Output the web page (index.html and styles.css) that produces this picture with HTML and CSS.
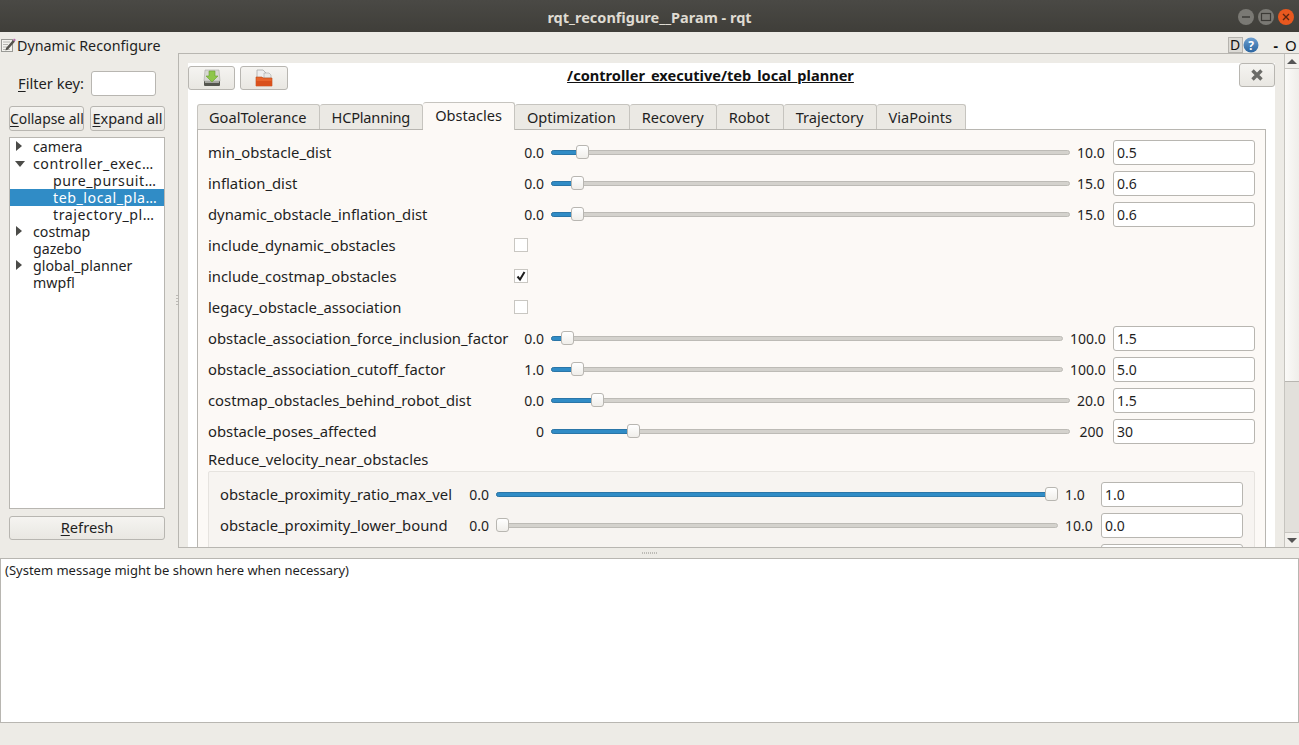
FILE: index.html
```html
<!DOCTYPE html>
<html lang="en">
<head>
<meta charset="utf-8">
<title>rqt_reconfigure__Param - rqt</title>
<link rel="stylesheet" href="styles.css">
</head>
<body>
<header class="titlebar">
  <span class="title">rqt_reconfigure__Param - rqt</span>
  <div class="winbtns">
    <span class="winbtn"><svg width="16" height="16" viewBox="0 0 16 16"><path d="M4 8h8" stroke="#3c3b37" stroke-width="1.5"/></svg></span>
    <span class="winbtn"><svg width="16" height="16" viewBox="0 0 16 16"><rect x="3.5" y="4.5" width="9" height="7" fill="none" stroke="#3c3b37" stroke-width="1.2"/></svg></span>
    <span class="winbtn close"><svg width="16" height="16" viewBox="0 0 16 16"><path d="M5 5l6 6M11 5l-6 6" stroke="#5a2410" stroke-width="1.4"/></svg></span>
  </div>
</header>
<div class="docktitle">
  <svg class="dockicon" width="16" height="16" viewBox="0 0 16 16"><rect x="1.5" y="2.5" width="11" height="12" fill="#f4f3ef" stroke="#9a9a96"/><path d="M3 5h7M3 7.5h5M3 10h4M3 12.5h7" stroke="#b5b5b0"/><path d="M6 11l7-8 2 1.500-7 8-2.500 1z" fill="#55534e"/><path d="M13 3l1-1.500 1.800 1.300-1 1.600z" fill="#b267a8"/></svg>
  <span class="docktext">Dynamic Reconfigure</span>
  <span class="dockright">
    <span class="dbox">D</span>
    <svg class="help" width="16" height="16" viewBox="0 0 16 16"><defs><linearGradient id="hg" x1="0" y1="0" x2="0" y2="1"><stop offset="0" stop-color="#6d9fd0"/><stop offset="1" stop-color="#2a649f"/></linearGradient></defs><circle cx="8" cy="8" r="7.500" fill="url(#hg)"/><text x="8" y="12.500" text-anchor="middle" class="helpq">?</text></svg>
    <span class="dash">-</span>
    <span class="oh">O</span>
  </span>
</div>
<main class="main">
  <aside class="left">
    <div class="filter">
      <span class="flabel"><u>F</u>ilter key:</span>
      <span class="input finput"></span>
    </div>
    <div class="btnrow">
      <span class="btn tight"><u>C</u>ollapse all</span>
      <span class="btn"><u>E</u>xpand all</span>
    </div>
    <div class="tree">
      <div class="node"><i class="arrow right"></i>camera</div>
      <div class="node elided"><i class="arrow down"></i>controller_exec…</div>
      <div class="node sub elided">pure_pursuit…</div>
      <div class="node sub elided sel">teb_local_pla…</div>
      <div class="node sub elided">trajectory_pl…</div>
      <div class="node"><i class="arrow right"></i>costmap</div>
      <div class="node">gazebo</div>
      <div class="node"><i class="arrow right"></i>global_planner</div>
      <div class="node">mwpfl</div>
    </div>
    <span class="btn refresh"><u>R</u>efresh</span>
    <i class="dots vdots"></i>
  </aside>
  <section class="panel">
    <div class="sheet">
      <div class="toolbar">
        <span class="btn tool">
          <svg width="20" height="18" viewBox="0 0 20 18"><path d="M3 1h14l1 11H2z" fill="#d8d8d3" stroke="#a9a9a4" stroke-width=".6"/><rect x="2" y="12" width="16" height="5" rx="1" fill="#55564f"/><rect x="3" y="12" width="14" height="2" fill="#a7a8a2"/><path d="M7 2h6v5h3l-6 6-6-6h3z" fill="#8ec64a" stroke="#6a9f2f" stroke-width=".6"/></svg>
        </span>
        <span class="btn tool t2">
          <svg width="18" height="18" viewBox="0 0 18 18"><path d="M2 1h6l3 3v5H2z" fill="#eee" stroke="#a8a8a8" stroke-width=".8"/><path d="M9 4h5l2 2v3H9z" fill="#e8e8e6" stroke="#a8a8a8" stroke-width=".6"/><path d="M1 8h6l1 1h9v8H1z" fill="#e8642c" stroke="#b84a18" stroke-width=".6"/><rect x="1" y="12" width="16" height="5" fill="#d9501c"/></svg>
        </span>
        <span class="nodepath">/controller_executive/teb_local_planner</span>
        <span class="btn closebtn">
          <svg width="14" height="14" viewBox="0 0 14 14"><path d="M2.500 2.500l9 9M11.500 2.500l-9 9" stroke="#6b6b68" stroke-width="3.400"/></svg>
        </span>
      </div>
      <nav class="tabs">
        <span class="tab">GoalTolerance</span>
        <span class="tab">HCPlanning</span>
        <span class="tab active">Obstacles</span>
        <span class="tab">Optimization</span>
        <span class="tab">Recovery</span>
        <span class="tab">Robot</span>
        <span class="tab">Trajectory</span>
        <span class="tab">ViaPoints</span>
      </nav>
      <div class="pane">
        <div class="row"><span class="lbl">min_obstacle_dist</span><span class="min">0.0</span><span class="slider" style="--p:.05"><i></i><b></b></span><span class="max">10.0</span><span class="input">0.5</span></div>
        <div class="row"><span class="lbl">inflation_dist</span><span class="min">0.0</span><span class="slider" style="--p:.04"><i></i><b></b></span><span class="max">15.0</span><span class="input">0.6</span></div>
        <div class="row"><span class="lbl">dynamic_obstacle_inflation_dist</span><span class="min">0.0</span><span class="slider" style="--p:.04"><i></i><b></b></span><span class="max">15.0</span><span class="input">0.6</span></div>
        <div class="row"><span class="lbl">include_dynamic_obstacles</span><span class="check"></span></div>
        <div class="row"><span class="lbl">include_costmap_obstacles</span><span class="check"><svg width="12" height="12" viewBox="0 0 12 12"><path d="M2.500 6.500l2.500 3L9.500 2" fill="none" stroke="#1e1e1e" stroke-width="2"/></svg></span></div>
        <div class="row"><span class="lbl">legacy_obstacle_association</span><span class="check"></span></div>
        <div class="row"><span class="lbl">obstacle_association_force_inclusion_factor</span><span class="min">0.0</span><span class="slider" style="--p:.02"><i></i><b></b></span><span class="max wide">100.0</span><span class="input">1.5</span></div>
        <div class="row"><span class="lbl">obstacle_association_cutoff_factor</span><span class="min">1.0</span><span class="slider" style="--p:.04"><i></i><b></b></span><span class="max wide">100.0</span><span class="input">5.0</span></div>
        <div class="row"><span class="lbl">costmap_obstacles_behind_robot_dist</span><span class="min">0.0</span><span class="slider" style="--p:.08"><i></i><b></b></span><span class="max">20.0</span><span class="input">1.5</span></div>
        <div class="row"><span class="lbl">obstacle_poses_affected</span><span class="min">0</span><span class="slider" style="--p:.15"><i></i><b></b></span><span class="max mid">200</span><span class="input">30</span></div>
        <div class="grouptitle">Reduce_velocity_near_obstacles</div>
        <div class="group">
          <div class="row"><span class="lbl">obstacle_proximity_ratio_max_vel</span><span class="min">0.0</span><span class="slider" style="--p:1"><i></i><b></b></span><span class="max">1.0</span><span class="input">1.0</span></div>
          <div class="row"><span class="lbl">obstacle_proximity_lower_bound</span><span class="min">0.0</span><span class="slider" style="--p:0"><i></i><b></b></span><span class="max">10.0</span><span class="input">0.0</span></div>
          <div class="row rowend"><span class="input"></span></div>
        </div>
      </div>
    </div>
    <div class="vscroll">
      <span class="sbtn"><i class="tri up"></i></span>
      <span class="thumb"></span>
      <span class="strack"></span>
      <span class="sbtn"><i class="tri dn"></i></span>
    </div>
  </section>
</main>
<div class="hsplit"><i class="dots hdots"></i></div>
<div class="log">(System message might be shown here when necessary)</div>
<div class="status"></div>
</body>
</html>
```
FILE: styles.css
```css
* { box-sizing: border-box; }
html, body { margin: 0; height: 745px; overflow: hidden; }
body {
  background: #edebe6;
  color: #1f1f1f;
  font-family: "Noto Sans", "Open Sans", sans-serif;
  font-size: 14px;
  line-height: 17px;
}
u { text-underline-offset: 2px; }

.titlebar {
  height: 32px;
  background: linear-gradient(#4a4945 0, #3f3e39 100%);
  position: relative;
  display: flex;
  align-items: center;
  justify-content: center;
  padding-top: 3px;
}
.title { color: #dfdbd2; font-weight: 700; font-size: 14.5px; }
.winbtns { position: absolute; right: 5px; top: 9px; display: flex; gap: 4px; }
.winbtn {
  width: 16px; height: 16px; border-radius: 50%;
  background: #7a7974;
  display: block;
}
.winbtn svg { display: block; }
.winbtn.close { background: #e9581f; }

.docktitle { height: 21px; display: flex; align-items: center; padding-top: 5px; }
.dockicon { margin-left: 0; flex: none; margin-top: -1px; }
.docktext { margin-left: 1px; font-size: 14.3px; }
.dockright { margin-left: auto; display: flex; align-items: center; height: 16px; }
.dbox {
  width: 15px; height: 16px; border: 1px solid #b5b3ae; background: #dcdad5;
  line-height: 14px; text-align: center; font-size: 14px; color: #111;
}
.help { display: block; }
.helpq { font: 700 12px "Noto Sans", sans-serif; fill: #fff; }
.dash { margin-left: 15px; font-weight: 700; color: #111; }
.oh { margin-left: 7px; width: 14px; color: #111; font-size: 15px; }

.main { height: 495px; display: flex; }
.left { width: 178px; flex: none; padding: 18px 13px 0 9px; display: flex; flex-direction: column; position: relative; }
.filter { display: flex; align-items: center; height: 25px; padding-left: 9px; gap: 6px; }
.flabel { width: 67px; white-space: nowrap; font-size: 14.7px; }
.input {
  display: block;
  background: #fff;
  border: 1px solid #b8b6b1;
  border-radius: 3px;
  height: 25px;
  line-height: 23px;
  padding-left: 3px;
  color: #1f1f1f;
}
.finput { width: 65px; }
.btnrow { display: flex; gap: 6px; margin-top: 10px; height: 25px; }
.btn {
  display: block;
  background: linear-gradient(#f5f4f1, #e9e7e2);
  border: 1px solid #b8b6b1;
  border-radius: 3px;
  text-align: center;
  white-space: nowrap;
  overflow: hidden;
}
.btnrow .btn { width: 75px; height: 25px; line-height: 23px; font-size: 14.5px; }
.btnrow .btn.tight { font-size: 13.9px; }
.tree {
  margin-top: 6px;
  height: 372px;
  background: #fff;
  border: 1px solid #b8b6b1;
}
.node {
  height: 17px; line-height: 17px;
  padding-left: 23px;
  position: relative;
  white-space: nowrap;
  font-size: 14.2px;
}
.node.sub { padding-left: 43px; }
.node.elided { letter-spacing: .55px; }
.node.sel { background: #308cc6; color: #fff; }
.arrow { position: absolute; display: block; width: 0; height: 0; }
.arrow.right { left: 6px; top: 3px; border-left: 6px solid #4b4b48; border-top: 5px solid transparent; border-bottom: 5px solid transparent; }
.arrow.down { left: 5px; top: 6px; border-top: 6px solid #4b4b48; border-left: 5px solid transparent; border-right: 5px solid transparent; }
.refresh { margin-top: 7px; height: 24px; line-height: 20px; font-size: 14.7px; }
.vdots { position: absolute; right: 0; top: 242px; width: 2px; height: 12px; background: repeating-linear-gradient(#bdbbb6 0 1px, transparent 1px 3px); }

.panel {
  flex: 1;
  display: flex;
  border-top: 1px solid #b8b6b1;
  border-left: 1px solid #b8b6b1;
  border-bottom: 1px solid #b8b6b1;
  min-width: 0;
}
.sheet {
  width: 1096px;
  margin: 9px 0 0 0;
  padding-left: 9px;
  flex: none;
  overflow: hidden;
  position: relative;
}
.sheet::before {
  content: "";
  position: absolute;
  left: 9px; top: 0; bottom: 0; width: 1087px;
  background: #fff;
}
.toolbar { position: relative; height: 39px; }
.tool {
  position: absolute; left: 0; top: 3px;
  width: 47px; height: 24px;
  display: flex; align-items: center; justify-content: center;
}
.tool.t2 { left: 52px; width: 48px; }
.nodepath {
  position: absolute; left: 0; width: 1045px; top: 4px;
  text-align: center; font-weight: 700; text-decoration: underline; font-size: 14.6px;
  color: #111;
}
.closebtn {
  position: absolute; right: 0; top: 0;
  width: 36px; height: 24px;
  display: flex; align-items: center; justify-content: center;
}
.tabs { position: relative; display: flex; margin-left: 9px; height: 27px; align-items: flex-end; }
.tab {
  display: block;
  height: 25px; line-height: 25px;
  padding: 0 12px;
  background: #ebe9e4;
  border: 1px solid #c6c4bf;
  border-bottom: none;
  border-left: none;
  border-radius: 3px 3px 0 0;
  white-space: nowrap;
  font-size: 14.6px;
}
.tab:first-child { border-left: 1px solid #c6c4bf; padding-left: 11px; }
.tab:nth-child(2) { letter-spacing: -.2px; }
.tab:nth-child(4), .tab:nth-child(6), .tab:nth-child(8) { padding-right: 13px; }
.tab.active {
  height: 28px; line-height: 25px;
  background: #fcf9f6;
  position: relative;
  margin-bottom: -1px;
  z-index: 1;
}
.pane {
  position: relative;
  margin-left: 9px;
  width: 1069px;
  height: 420px;
  background: #fcf9f6;
  border: 1px solid #b8b6b1;
  padding: 10px 10px 0 10px;
}
.row { display: flex; align-items: center; height: 25px; margin-bottom: 6px; white-space: nowrap; }
.lbl { width: 300px; flex: none; font-size: 14.8px; }
.min { flex: none; width: 36px; text-align: right; margin-right: 7px; }
.max { flex: none; min-width: 29px; margin: 0 7px 0 7px; }
.max.wide { min-width: 36px; }
.max.mid { text-align: center; }
.row > .input { flex: none; width: 142px; }
.rowend { justify-content: flex-end; }
.slider { flex: 1; position: relative; height: 5px; border-radius: 2.5px; background: #d4d2cd; border: 1px solid #bdbbb6; --t: calc(var(--p) * (100% - 11px)); }
.slider i {
  position: absolute; left: -1px; top: -1px; bottom: -1px;
  width: calc(var(--t) + 6px);
  background: #308cc6;
  border: 1px solid #2a76a8;
  border-radius: 2.5px;
}
.slider b {
  position: absolute; left: calc(var(--t) - 1px); top: -6px;
  width: 13px; height: 14px;
  background: linear-gradient(#fff, #f0eeea);
  border: 1px solid #b8b6b1;
  border-radius: 3px;
}
.check {
  width: 14px; height: 14px;
  background: #fff;
  border: 1px solid #c9c7c2;
  margin: 0 0 1px 6px;
  display: flex; align-items: center; justify-content: center;
}
.grouptitle { height: 21px; line-height: 18px; font-size: 14.8px; }
.group {
  width: 1047px;
  background: #f7f4f1;
  border: 1px solid #e6e3df;
  border-radius: 2px;
  padding: 10px 11px 0 11px;
}
.group .lbl { width: 235px; }
.group .min { width: 21px; margin-left: 13px; }

.vscroll {
  width: 15px;
  margin-left: 9px;
  flex: none;
  display: flex;
  flex-direction: column;
  background: #e2e0db;
  border-left: 1px solid #c6c4bf;
}
.sbtn { display: flex; height: 14px; flex: none; align-items: center; justify-content: center; background: #f2f0ec; }
.tri { display: block; width: 0; height: 0; border-left: 5px solid transparent; border-right: 5px solid transparent; }
.tri.up { border-bottom: 5px solid #555; }
.tri.dn { border-top: 5px solid #555; }
.thumb { display: block; height: 314px; background: linear-gradient(90deg, #fbfaf8, #efeeea); border-top: 1px solid #c6c4bf; border-bottom: 1px solid #b8b6b1; flex: none; }
.strack { display: block; flex: 1; border-bottom: 1px solid #c6c4bf; }

.hsplit { height: 10px; display: flex; align-items: center; justify-content: center; }
.dots { display: block; }
.hdots { width: 16px; height: 2px; background: repeating-linear-gradient(90deg, #bdbbb6 0 1px, transparent 1px 2px); }
.log {
  height: 165px;
  background: #fff;
  border: 1px solid #b8b6b1;
  padding: 3px 0 0 4px;
  font-size: 13px;
}
.status { height: 22px; }
```
